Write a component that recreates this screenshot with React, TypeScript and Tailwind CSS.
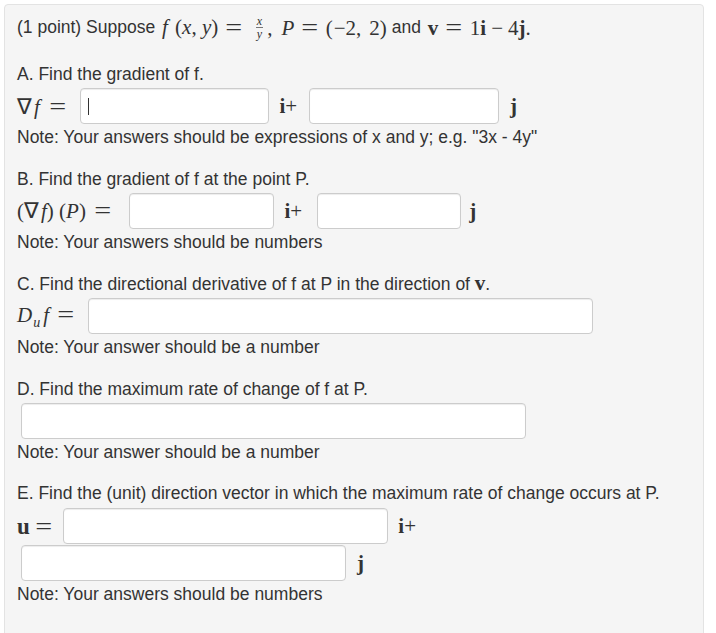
import React from 'react';

const M: React.FC<{ children: React.ReactNode; className?: string }> = ({ children, className }) => (
  <span className={`font-[family-name:'Liberation_Serif',serif] text-[21px] leading-[20px] whitespace-pre ${className ?? ''}`}>{children}</span>
);

const I: React.FC<{ children: React.ReactNode; className?: string }> = ({ children, className }) => (
  <span className={`italic ${className ?? ''}`}>{children}</span>
);
const B: React.FC<{ children: React.ReactNode; className?: string }> = ({ children, className }) => (
  <span className={`font-bold ${className ?? ''}`}>{children}</span>
);
const Eq: React.FC<{ className: string }> = ({ className }) => (
  <span className={`inline-block text-[24px] scale-x-[1.25] ${className}`}>=</span>
);
const Nabla: React.FC = () => <span className="text-[22px] mr-[2px]">∇</span>;

const Box: React.FC<{ className: string; caret?: boolean }> = ({ className, caret }) => (
  <div
    className={`h-[36px] shrink-0 bg-white border border-[#cccccc] rounded-[4px] shadow-[inset_0_1px_1px_rgba(0,0,0,0.075)] flex items-center ${className}`}
  >
    {caret && <span className="ml-[7px] w-px h-[17px] bg-[#333]" />}
  </div>
);

const Note: React.FC<{ children: React.ReactNode }> = ({ children }) => (
  <div className="mt-[3px] leading-[20px]">{children}</div>
);

export default function App() {
  return (
    <div className="pl-1 pt-1 font-[family-name:'Liberation_Sans',Arial,sans-serif] text-[17.5px] text-[#333] bg-white min-h-[633px]">
      <div className="w-[700px] min-h-[640px] border border-[#e3e3e3] rounded-[4px] bg-[#f5f5f5] px-3 pt-3">
        <div className="h-5 leading-[20px] flex items-center whitespace-pre">
          <span>(1 point) Suppose </span>
          <M className="ml-[2px]">
            <I className="mr-[2px]">f</I> (<I>x</I>, <I>y</I>)
          </M>
          <M>
            <Eq className="mx-[9px]" />
          </M>
          <span className="inline-flex flex-col items-center ml-[6px] font-[family-name:'Liberation_Serif',serif] italic text-[12px] leading-[10px]">
            <span className="border-b border-[#777] px-[1px] pb-[1px]">x</span>
            <span className="pt-[1px]">y</span>
          </span>
          <M>
            <span className="ml-[4px] mr-[9px]">,</span>
            <I>P</I>
            <Eq className="mx-[9px]" />
            <span className="mr-[1px]">(</span>−2,<span className="ml-[8px]">2</span>)
          </M>
          <span> and </span>
          <M>
            <B className="ml-[2px]">v</B>
            <Eq className="mx-[9px]" />
            1<B>i</B>
            <span className="mx-[5px]">−</span>4<B>j</B>.
          </M>
        </div>

        {/* A */}
        <div className="mt-[27px] mb-[21.5px]">
          <div className="leading-[20px]">A. Find the gradient of f.</div>
          <div className="mt-[4px] flex items-center">
            <M>
              <Nabla />
              <I>f</I>
              <Eq className="ml-[11px] mr-[6px]" />
            </M>
            <Box className="ml-[10px] w-[189px]" caret />
            <M className="ml-[10px]">
              <B>i</B>+
            </M>
            <Box className="ml-[12px] w-[190px]" />
            <M className="ml-[11px]">
              <B>j</B>
            </M>
          </div>
          <Note>Note: Your answers should be expressions of x and y; e.g. "3x - 4y"</Note>
        </div>

        {/* B */}
        <div className="mb-[21.5px]">
          <div className="leading-[20px]">B. Find the gradient of f at the point P.</div>
          <div className="mt-[4px] flex items-center">
            <M>
              (<Nabla />
              <I>f</I>) (<I>P</I>)
              <Eq className="ml-[10px] mr-[6px]" />
            </M>
            <Box className="ml-[14px] w-[145px]" />
            <M className="ml-[10px]">
              <B>i</B>+
            </M>
            <Box className="ml-[15px] w-[144px]" />
            <M className="ml-[8px]">
              <B>j</B>
            </M>
          </div>
          <Note>Note: Your answers should be numbers</Note>
        </div>

        {/* C */}
        <div className="mb-[21.5px]">
          <div className="leading-[20px]">
            C. Find the directional derivative of f at P in the direction of{' '}
            <M>
              <B>v</B>
            </M>
            .
          </div>
          <div className="mt-[4px] flex items-center">
            <M>
              <I>D</I>
              <span className="italic text-[14px] relative top-[5px] ml-[1px] mr-[3px]">u</span>
              <I>f</I>
              <Eq className="ml-[10px] mr-[5px]" />
            </M>
            <Box className="ml-[10px] w-[505px]" />
          </div>
          <Note>Note: Your answer should be a number</Note>
        </div>

        {/* D */}
        <div className="mb-[21.5px]">
          <div className="leading-[20px]">D. Find the maximum rate of change of f at P.</div>
          <div className="mt-[4px] flex items-center">
            <Box className="ml-[4px] w-[505px]" />
          </div>
          <Note>Note: Your answer should be a number</Note>
        </div>

        {/* E */}
        <div>
          <div className="leading-[20px]">E. Find the (unit) direction vector in which the maximum rate of change occurs at P.</div>
          <div className="mt-[5px] flex items-center">
            <M>
              <B className="text-[23px]">u</B>
              <Eq className="ml-[7px] mr-[3px]" />
            </M>
            <Box className="ml-[10px] w-[325px]" />
            <M className="ml-[10px]">
              <B>i</B>+
            </M>
          </div>
          <div className="mt-[1px] flex items-center">
            <Box className="ml-[4px] w-[325px]" />
            <M className="ml-[11px]">
              <B>j</B>
            </M>
          </div>
          <Note>Note: Your answers should be numbers</Note>
        </div>
      </div>
    </div>
  );
}
